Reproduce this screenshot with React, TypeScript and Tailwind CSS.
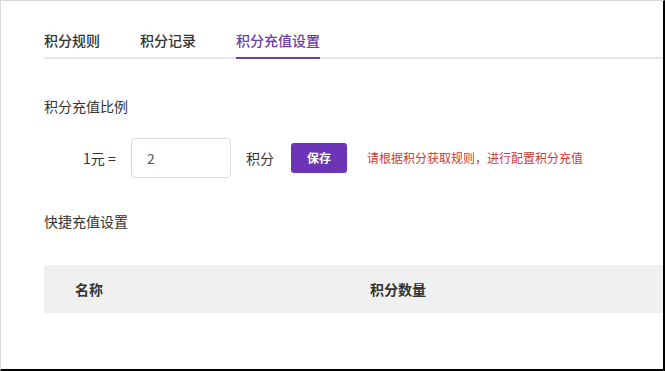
export default function App() {
  const tabs = ['积分规则', '积分记录', '积分充值设置'];
  const active = 2;

  return (
    <div
      className="w-[665px] h-[371px] bg-white border-l border-t border-[#d9d9d9] border-r-2 border-b-2 border-r-black border-b-black text-[#333]"
      style={{ fontFamily: '"Noto Sans CJK SC", "Noto Sans", sans-serif' }}
    >
      <div className="pl-[43px] pt-[29px]">
        {/* tabs */}
        <div className="flex gap-10 border-b-2 border-[#e6e6e6]">
          {tabs.map((t, i) => (
            <div
              key={t}
              className={`-mb-[2px] pb-[7px] text-[14px] leading-[20px] font-medium border-b-2 ${
                i === active ? 'border-[#6b3fa6] text-[#6b3fa6]' : 'border-transparent text-[#333]'
              }`}
            >
              {t}
            </div>
          ))}
        </div>

        <div className="mt-[37px] text-[14px] leading-[20px]">积分充值比例</div>

        {/* ratio row */}
        <div className="mt-[22px] pl-[39px] flex items-center text-[14px]">
          <span className="w-[34px]">1元 =</span>
          <div className="ml-[14px] w-[100px] h-[40px] border border-[#dcdcdc] rounded-[4px] flex items-center pl-[15px] text-[#555]">
            2
          </div>
          <span className="ml-[15px]">积分</span>
          <button className="ml-[17px] w-[56px] h-[30px] rounded-[3px] bg-[#6c35b7] text-white text-[12px] font-bold">
            保存
          </button>
          <span className="ml-[20px] text-[12px] text-[#cf3a35]">请根据积分获取规则，进行配置积分充值</span>
        </div>

        <div className="mt-[33px] text-[14px] leading-[20px]">快捷充值设置</div>

        {/* table header */}
        <div className="mt-[34px] h-[48px] bg-[#f0f0f0] flex items-center text-[14px] font-semibold text-[#333]">
          <div className="w-[326px] pl-[31px]">名称</div>
          <div>积分数量</div>
        </div>
      </div>
    </div>
  );
}
